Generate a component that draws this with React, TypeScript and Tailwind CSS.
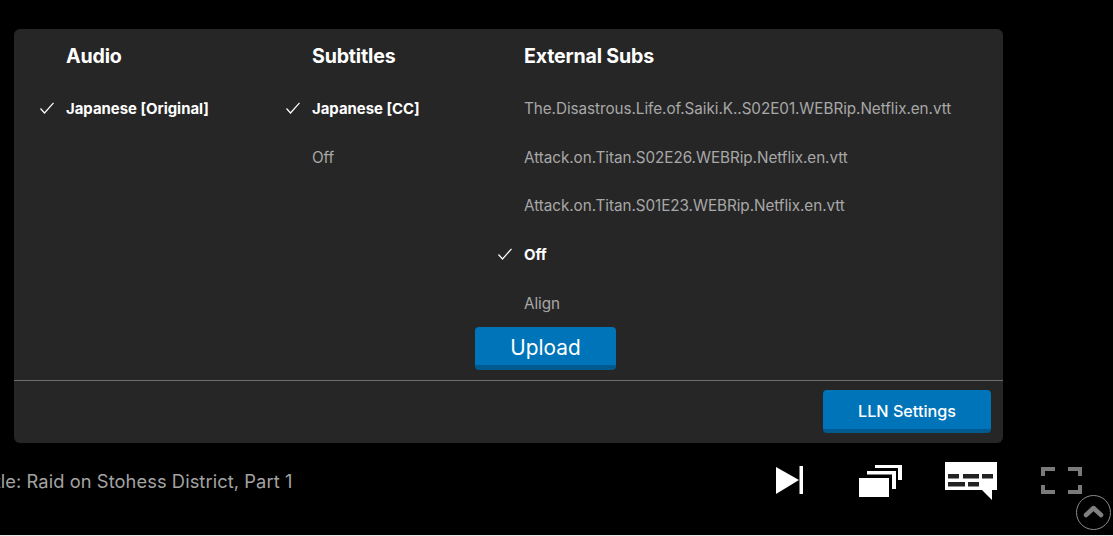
const font = "font-['Inter','Liberation_Sans',sans-serif]";

function Check() {
  return (
    <svg className="absolute left-[-27px] top-1/2 -translate-y-[9px]" width="16" height="16" viewBox="0 0 16 16" fill="none">
      <path d="M1.5 8.5 L5.5 13 L14.5 2.8" stroke="#ffffff" strokeWidth="1.2" />
    </svg>
  );
}

function Row({ label, active }: { label: string; active?: boolean }) {
  return (
    <div className={active ? "h-[48.75px] flex items-center pt-[1px]" : "h-[48.75px] flex items-center pt-[1.8px]"}>
      <span className={active ? "relative text-[14.9px] font-bold text-white whitespace-nowrap" : "text-[15.25px] text-[#a8a8a8] whitespace-nowrap tracking-[-0.05px]"}>
        {active && <Check />}
        {label}
      </span>
    </div>
  );
}

function Column({ title, width, rows }: { title: string; width: string; rows: { label: string; active?: boolean }[] }) {
  return (
    <div className={width}>
      <div className="h-[55px] flex items-center text-[19.6px] font-bold text-white tracking-[-0.17px]">{title}</div>
      <div>
        {rows.map((r) => (
          <Row key={r.label} label={r.label} active={r.active} />
        ))}
      </div>
    </div>
  );
}

export default function App() {
  return (
    <div className={`${font} relative w-[1113px] h-[536px] overflow-hidden bg-black border-b border-[#e8e8e8]`}>
      <div className="ml-[14px] w-[989px] pt-[29px]">
        <div className="h-[414px] rounded-[6px] bg-[#262626] flex flex-col">
          <div className="h-[352px] border-b border-[#6e6e6e] flex flex-col">
            <div className="h-[298px] flex pl-[52px]">
              <Column title="Audio" width="w-[246px]" rows={[{ label: "Japanese [Original]", active: true }]} />
              <Column
                title="Subtitles"
                width="w-[212px]"
                rows={[{ label: "Japanese [CC]", active: true }, { label: "Off" }]}
              />
              <Column
                title="External Subs"
                width="w-[460px]"
                rows={[
                  { label: "The.Disastrous.Life.of.Saiki.K..S02E01.WEBRip.Netflix.en.vtt" },
                  { label: "Attack.on.Titan.S02E26.WEBRip.Netflix.en.vtt" },
                  { label: "Attack.on.Titan.S01E23.WEBRip.Netflix.en.vtt" },
                  { label: "Off", active: true },
                  { label: "Align" },
                ]}
              />
            </div>
            <button className="ml-[461px] w-[141px] h-[43px] rounded-[4px] bg-[#0074b8] border-b-[5px] border-[#005a8f] text-[20.8px] font-normal text-white flex items-center justify-center pt-[3px]">
              Upload
            </button>
          </div>
          <div className="flex justify-end pr-[12px] pt-[9px]">
            <button className="w-[168px] h-[43px] rounded-[4px] bg-[#0074b8] border-b-[4px] border-[#005a8f] text-[16.2px] font-medium text-white flex items-center justify-center pt-[3px]">
              LLN Settings
            </button>
          </div>
        </div>
        <div className="relative h-[76px]">
          <div className="absolute left-[-14px] top-[26px] w-[320px] overflow-hidden h-[24px]">
            <div className="absolute right-[27.5px] top-0 text-[18.3px] leading-[24px] text-[#a3a3a3] whitespace-nowrap tracking-[0.08px]">
              Episode Title: Raid on Stohess District, Part 1
            </div>
          </div>
        </div>
      </div>

      {/* Player controls */}
      <svg className="absolute left-[776px] top-[466px]" width="28" height="28" viewBox="0 0 28 28">
        <path d="M0 1 L23 14 L0 28 Z" fill="#fff" />
        <rect x="23.5" y="0" width="3.5" height="28" fill="#fff" />
      </svg>
      <svg className="absolute left-[859px] top-[464px]" width="44" height="34" viewBox="0 0 44 34">
        <rect x="0" y="14" width="30" height="19" fill="#fff" />
        <path d="M8 7 H37 V25 H33 V10.5 H8 Z" fill="#fff" />
        <path d="M16 1 H43 V16 H39 V4 H16 Z" fill="#fff" />
      </svg>
      <svg className="absolute left-[944px] top-[462px]" width="53" height="40" viewBox="0 0 53 40">
        <path d="M1 0 H53 V28 H48 V38 L38 28 H1 Z" fill="#fff" />
        <rect x="4" y="12" width="11" height="4.5" fill="#222" />
        <rect x="19" y="12" width="16" height="4.5" fill="#222" />
        <rect x="38" y="12" width="11" height="4.5" fill="#222" />
        <rect x="4" y="20" width="17" height="4.5" fill="#222" />
        <rect x="24" y="20" width="11" height="4.5" fill="#222" />
      </svg>
      <svg className="absolute left-[1041px] top-[466px]" width="41" height="28" viewBox="0 0 41 28" fill="none" stroke="#7a7a7a" strokeWidth="4">
        <path d="M14 3 H2 V10" />
        <path d="M27 3 H39 V10" />
        <path d="M14 26 H2 V19" />
        <path d="M27 26 H39 V19" />
      </svg>
      <svg className="absolute left-[1076px] top-[495px]" width="36" height="36" viewBox="0 0 36 36" fill="none">
        <circle cx="17.5" cy="17.5" r="17" stroke="#8a8a8a" strokeWidth="1" />
        <path d="M10 20 L17.5 13 L25 20" stroke="#808080" strokeWidth="4.5" strokeLinecap="round" strokeLinejoin="round" />
      </svg>
    </div>
  );
}
